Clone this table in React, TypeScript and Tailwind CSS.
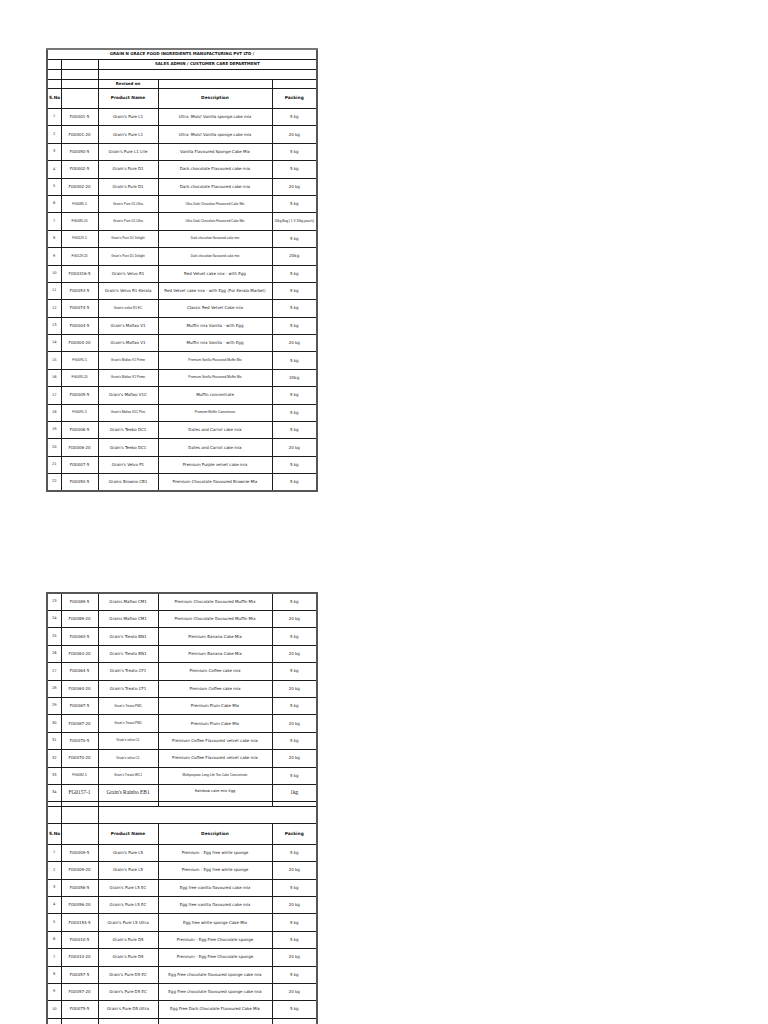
import React from "react";

// [sno, code, product, description, packing, smallFlags]
// smallFlags: c = code, p = product, d = description, k = packing use the narrow small face
type Row = [string, string, string, string, string, string?];

const firstRows: Row[] = [
  ["1", "FG0001-5", "Grain's Pure L1", "Ultra -Moist Vanilla sponge cake mix", "5 kg"],
  ["2", "FG0001-20", "Grain's Pure L1", "Ultra -Moist Vanilla sponge cake mix", "20 kg"],
  ["3", "FG0050-5", "Grain's Pure L1 Lite", "Vanilla Flavoured Sponge Cake Mix", "5 kg"],
  ["4", "FG0002-5", "Grain's Pure D1", "Dark chocolate Flavoured cake mix", "5 kg"],
  ["5", "FG0002-20", "Grain's Pure D1", "Dark chocolate Flavoured cake mix", "20 kg"],
  ["6", "FG0085-5", "Grain's Pure D1 Ultra", "Ultra Dark Chocolate Flavoured Cake Mix", "5 kg", "cpd"],
  ["7", "FG0085-20", "Grain's Pure D1 Ultra", "Ultra Dark Chocolate Flavoured Cake Mix", "20kg Bag ( 1 X 20kg pouch)", "cpdk"],
  ["8", "FG0129-5", "Grain's Pure D1 Delight", "Dark chocolate flavoured cake mix", "5 kg", "cpd"],
  ["9", "FG0129-20", "Grain's Pure D1 Delight", "Dark chocolate flavoured cake mix", "20kg", "cpd"],
  ["10", "FG00316-5", "Grain's  Velvo R1", "Red Velvet cake mix - with Egg", "5 kg"],
  ["11", "FG0053-5", "Grain's Velvo R1-Kerala", "Red Velvet cake mix - with Egg (For Kerala Market)", "5 kg"],
  ["12", "FG0074-5", "Grain's velvo R1 EC", "Classic Red Velvet Cake mix", "5 kg", "p"],
  ["13", "FG0004-5", "Grain's  Mafixo V1", "Muffin mix Vanilla - with Egg", "5 kg"],
  ["14", "FG0004-20", "Grain's  Mafixo V1", "Muffin mix Vanilla - with Egg", "20 kg"],
  ["15", "FG0095-5", "Grain's Mafixo V1 Prime", "Premium Vanilla Flavoured Muffin Mix", "5 kg", "cpd"],
  ["16", "FG0095-20", "Grain's Mafixo V1 Prime", "Premium Vanilla Flavoured Muffin Mix", "20kg", "cpd"],
  ["17", "FG0005-5", "Grain's  Mafixo V1C", "Muffin concentrate", "5 kg"],
  ["18", "FG0091-5", "Grain's Mafixo V1C Plus", "Premium Muffin Concentrate", "5 kg", "cpd"],
  ["19", "FG0006-5", "Grain's  Teebo DC1", "Dates and Carrot cake mix", "5 kg"],
  ["20", "FG0006-20", "Grain's  Teebo DC1", "Dates and Carrot cake mix", "20 kg"],
  ["21", "FG0007-5", "Grain's Velvo P1", "Premium Purple velvet cake mix", "5 kg"],
  ["22", "FG0050-5", "Grains Browno CB1", "Premium Chocolate flavoured Brownie Mix", "5 kg"],
];

const secondRows: Row[] = [
  ["23", "FG0089-5", "Grains Mafixo CM1", "Premium Chocolate flavoured Muffin  Mix", "5 kg"],
  ["24", "FG0089-20", "Grains Mafixo CM1", "Premium Chocolate flavoured Muffin  Mix", "20 kg"],
  ["25", "FG0063-5", "Grain's Treato BN1", "Premium Banana Cake  Mix", "5 kg"],
  ["26", "FG0063-20", "Grain's Treato BN1", "Premium Banana Cake  Mix", "20 kg"],
  ["27", "FG0064-5", "Grain's Treato CF1", "Premium Coffee cake mix", "5 kg"],
  ["28", "FG0064-20", "Grain's Treato CF1", "Premium Coffee cake mix", "20 kg"],
  ["29", "FG0067-5", "Grain's Treato PM1", "Premium Plum Cake Mix", "5 kg", "p"],
  ["30", "FG0067-20", "Grain's Treato PM1", "Premium Plum Cake Mix", "20 kg", "p"],
  ["31", "FG0070-5", "Grain's velvo C1", "Premium Coffee Flavoured velvet cake mix", "5 kg", "p"],
  ["32", "FG0070-20", "Grain's velvo C1", "Premium Coffee Flavoured velvet cake mix", "20 kg", "p"],
  ["33", "FG0082-5", "Grain's Treato WC1", "Multipurpose Long Life Tea Cake Concentrate", "5 kg", "cpd"],
];

const eggFreeRows: Row[] = [
  ["1", "FG0009-5", "Grain's  Pure L5", "Premium - Egg free white sponge", "5 kg"],
  ["2", "FG0009-20", "Grain's  Pure L5", "Premium - Egg free white sponge", "20 kg"],
  ["3", "FG0056-5", "Grain's Pure L5 EC", "Egg free vanilla flavoured cake  mix", "5 kg"],
  ["4", "FG0056-20", "Grain's Pure L5 EC", "Egg free vanilla flavoured cake  mix", "20 kg"],
  ["5", "FG00154-5", "Grain's Pure L5 Ultra", "Egg free white sponge Cake Mix", "5 kg"],
  ["6", "FG0010-5", "Grain's  Pure D5", "Premium - Egg Free Chocolate sponge", "5 kg"],
  ["7", "FG0010-20", "Grain's  Pure D5", "Premium - Egg Free Chocolate sponge", "20 kg"],
  ["8", "FG0057-5", "Grain's  Pure D5 EC", "Egg Free chocolate flavoured sponge cake mix", "5 kg"],
  ["9", "FG0057-20", "Grain's  Pure D5 EC", "Egg Free chocolate flavoured sponge cake mix", "20 kg"],
  ["10", "FG0075-5", "Grain's Pure D5 Ultra", "Egg Free Dark Chocolate Flavoured Cake Mix", "5 kg"],
];

const cell = "border border-[#1c1c1c] p-0 text-center align-middle leading-none whitespace-nowrap overflow-hidden";
const small = "font-['Liberation_Sans',sans-serif] text-[3.2px]";
const normal = "text-[4px]";

function DataRow({ row }: { row: Row }) {
  const [sno, code, product, desc, pack, flags = ""] = row;
  return (
    <tr className="h-[17.4px]">
      <td className={`${cell} text-[3.6px]`}>{sno}</td>
      <td className={`${cell} ${flags.includes("c") ? small : normal}`}>{code}</td>
      <td className={`${cell} ${flags.includes("p") ? small : normal}`}>{product}</td>
      <td className={`${cell} ${flags.includes("d") ? small : normal}`}>{desc}</td>
      <td className={`${cell} ${flags.includes("k") ? small : normal}`}>{pack}</td>
    </tr>
  );
}

function Cols() {
  return (
    <colgroup>
      <col className="w-[14px]" />
      <col className="w-[37px]" />
      <col className="w-[60px]" />
      <col className="w-[114px]" />
      <col className="w-[45px]" />
    </colgroup>
  );
}

function HeaderRow() {
  return (
    <tr className="h-[20.5px] font-bold text-[4.3px] text-[#111]">
      <td className={`${cell} text-left pl-[1px]`}>S.No</td>
      <td className={cell}></td>
      <td className={cell}>Product Name</td>
      <td className={cell}>Description</td>
      <td className={cell}>Packing</td>
    </tr>
  );
}

export default function App() {
  return (
    <div className="min-h-screen bg-white text-[#222] font-['DejaVu_Sans',sans-serif] pt-[48px] pl-[46px]">
      <table className="table-fixed border-collapse w-[270px] border-x-2 border-b-2 border-[#555]">
        <Cols />
        <tbody>
          <tr className="h-[10px]">
            <td colSpan={5} className={`${cell} border-t-2 border-t-[#777] font-bold text-[4px] text-[#111]`}>
              GRAIN N GRACE FOOD INGREDIENTS MANUFACTURING PVT LTD /
            </td>
          </tr>
          <tr className="h-[10px]">
            <td className={cell}></td>
            <td className={cell}></td>
            <td colSpan={3} className={`${cell} font-bold text-[4px] text-[#111]`}>
              SALES ADMIN / CUSTOMER CARE DEPARTMENT
            </td>
          </tr>
          <tr className="h-[10px]">
            <td className={cell}></td>
            <td className={cell}></td>
            <td colSpan={3} className={cell}></td>
          </tr>
          <tr className="h-[9px]">
            <td className={cell}></td>
            <td className={cell}></td>
            <td className={`${cell} font-bold text-[4px] text-[#111]`}>Revised on</td>
            <td className={cell}></td>
            <td className={cell}></td>
          </tr>
          <HeaderRow />
          {firstRows.map((r) => (
            <DataRow key={r[0]} row={r} />
          ))}
        </tbody>
      </table>

      <table className="mt-[100px] table-fixed border-collapse w-[270px] border-2 border-[#555]">
        <Cols />
        <tbody>
          {secondRows.map((r) => (
            <DataRow key={r[0]} row={r} />
          ))}
          <tr className="h-[17.4px]">
            <td className={`${cell} text-[3.6px]`}>34</td>
            <td className={`${cell} font-['Liberation_Serif',serif] text-[5.4px]`}>FG0157-1</td>
            <td className={`${cell} font-['Liberation_Serif',serif] text-[5.4px]`}>Grain's Rainbo EB1</td>
            <td className={`${cell} align-top pt-[5px] text-[3.6px]`}>Rainbow cake mix-Egg</td>
            <td className={`${cell} font-['Liberation_Serif',serif] text-[5.4px]`}>1kg</td>
          </tr>
          <tr className="h-[5px]">
            <td className={cell}></td>
            <td className={cell}></td>
            <td className={cell}></td>
            <td className={cell}></td>
            <td className={cell}></td>
          </tr>
          <tr className="h-[17px]">
            <td className={cell}></td>
            <td className={cell}></td>
            <td colSpan={3} className={cell}></td>
          </tr>
          <HeaderRow />
          {eggFreeRows.map((r) => (
            <DataRow key={"e" + r[0]} row={r} />
          ))}
          {/* next row continues past the bottom of the page */}
          <tr className="h-[17.4px]">
            <td className={cell}></td>
            <td className={cell}></td>
            <td className={cell}></td>
            <td className={cell}></td>
            <td className={cell}></td>
          </tr>
        </tbody>
      </table>
    </div>
  );
}
